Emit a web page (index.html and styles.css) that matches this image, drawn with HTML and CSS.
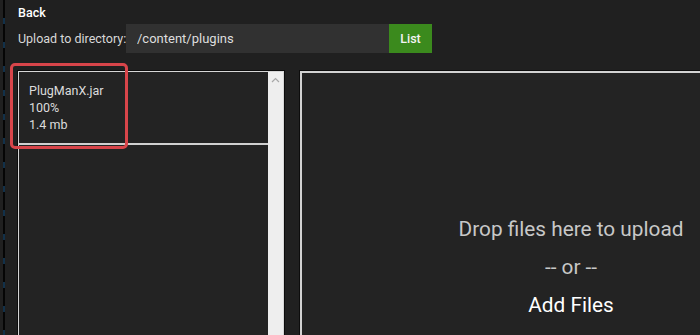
FILE: index.html
```html
<!DOCTYPE html>
<html lang="en">
<head>
  <meta charset="UTF-8">
  <meta name="viewport" content="width=device-width, initial-scale=1.0">
  <title>Upload Files</title>
  <link rel="stylesheet" href="styles.css">
</head>
<body>

  <div class="rail"></div>

  <div id="uploader">
    <a class="back-link" href="#">Back</a>

    <div class="dir-row">
      <label class="dir-label" for="dir-input">Upload to directory:</label>
      <input id="dir-input" class="dir-input" type="text" value="/content/plugins">
      <button class="list-btn">List</button>
    </div>

    <div class="panels">
      <div class="file-list">
        <div class="file-items">
          <div class="file-item">
            <div>PlugManX.jar</div>
            <div>100%</div>
            <div>1.4 mb</div>
          </div>
        </div>
        <div class="scrollbar">
          <svg width="9" height="6" viewBox="0 0 9 6"><path d="M1 5 L4.5 1.5 L8 5" fill="none" stroke="#a8a8a8" stroke-width="1.2"/></svg>
        </div>
        <div class="highlight"></div>
      </div>

      <div class="drop-zone">
        <div class="drop-text">Drop files here to upload</div>
        <div class="drop-or">-- or --</div>
        <div class="add-files">Add Files</div>
      </div>
    </div>
  </div>

</body>
</html>
```

FILE: styles.css
```css
body {
  font-family: Roboto, "Liberation Sans", sans-serif;
  background-color: #202020;
  color: #dcdcdc;
  margin: 0;
  height: 335px;
  overflow: hidden;
  display: flex;
}

.rail {
  width: 2px;
  margin-left: 3px;
  flex-shrink: 0;
  background: repeating-linear-gradient(#050505 0 18px, #12314a 18px 24px);
}

#uploader {
  margin-left: 13px;
  padding-top: 5px;
  display: flex;
  flex-direction: column;
  flex-shrink: 0;
}

.back-link {
  color: #ffffff;
  text-decoration: none;
  font-size: 12.5px;
  font-weight: 500;
  line-height: 16px;
}

.dir-row {
  display: flex;
  align-items: center;
  margin-top: 3px;
  height: 29px;
}

.dir-label {
  font-size: 12.5px;
  color: #d8d8d8;
  width: 108px;
  flex-shrink: 0;
  white-space: nowrap;
}

.dir-input {
  width: 263px;
  height: 29px;
  box-sizing: border-box;
  border: none;
  background-color: #313131;
  color: #dedede;
  font-family: Roboto, "Liberation Sans", sans-serif;
  font-size: 13px;
  padding: 0 11px;
  outline: none;
}

.list-btn {
  width: 43px;
  height: 29px;
  border: none;
  background-color: #3b8a1d;
  color: #f4f4f4;
  font-family: Roboto, "Liberation Sans", sans-serif;
  font-size: 12.5px;
  font-weight: 500;
  padding: 0;
}

.panels {
  display: flex;
  gap: 16px;
  margin-top: 18px;
}

.file-list {
  position: relative;
  width: 264px;
  height: 270px;
  display: flex;
  border: 1px solid #d6d6d6;
  box-shadow: 0 0 0 1px #0c0c0c;
  background-color: #232323;
}

.file-items {
  flex: 1;
}

.file-item {
  padding: 10px 10px 10px;
  height: 51px;
  border-bottom: 2px solid #d0d0d0;
  font-size: 12.5px;
  line-height: 17px;
  color: #dcdcdc;
}

.scrollbar {
  width: 15px;
  background-color: #eeeeee;
  display: flex;
  justify-content: center;
  padding-top: 5px;
  box-sizing: border-box;
}

.highlight {
  position: absolute;
  left: -9px;
  top: -9px;
  width: 112px;
  height: 80px;
  border: 3px solid #d8454a;
  border-radius: 5px;
}

.drop-zone {
  width: 542px;
  height: 270px;
  border: 2px solid #d2d2d2;
  box-shadow: 0 0 0 1px #0c0c0c;
  background-color: #232323;
  display: flex;
  flex-direction: column;
  align-items: center;
  padding-top: 137px;
  box-sizing: border-box;
}

.drop-text,
.drop-or,
.add-files {
  font-size: 20.8px;
  line-height: 38px;
}

.drop-text,
.drop-or {
  color: #c8c8c8;
}

.add-files {
  color: #ffffff;
}
```
